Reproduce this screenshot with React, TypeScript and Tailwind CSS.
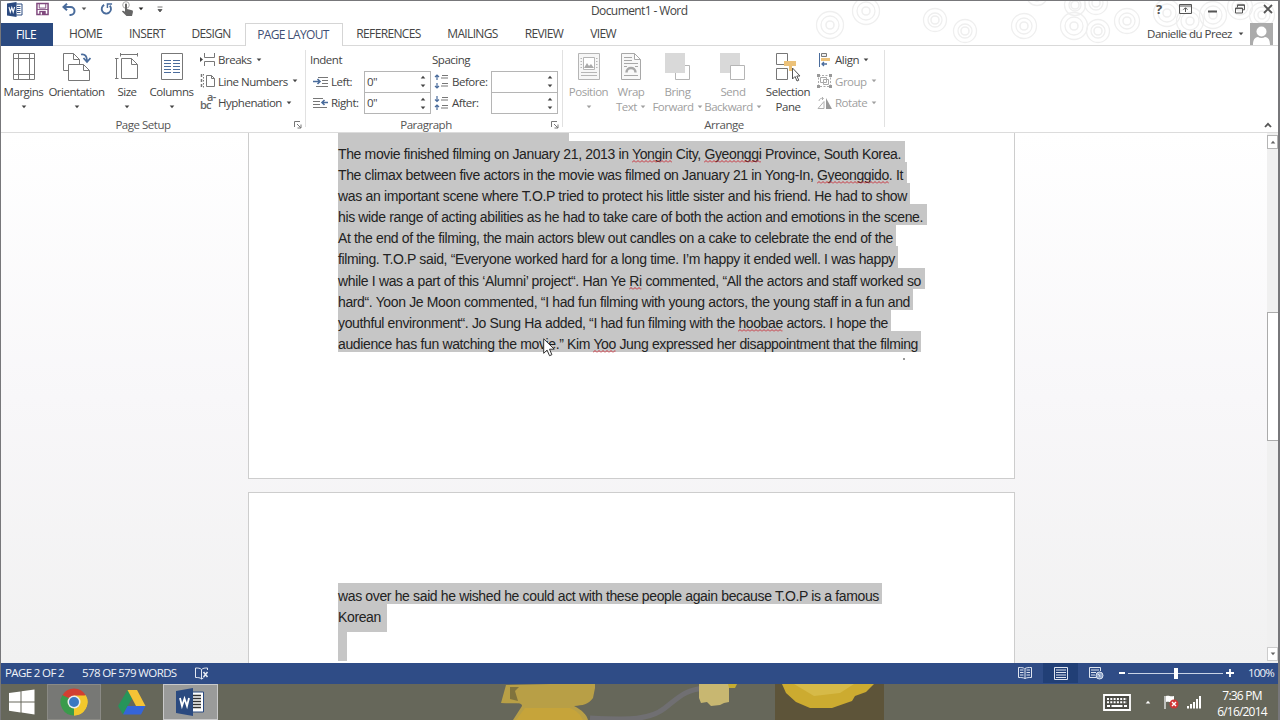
import type { ReactNode } from "react"
import clsx from "clsx"

const ui = "font-['Open_Sans','Noto_Sans',sans-serif]"

function Caret({ className = "" }: { className?: string }) {
  return (
    <svg width="6" height="4" viewBox="0 0 6 4" className={clsx("shrink-0", className)}>
      <path d="M.7.500h4.600L3 3.300z" fill="currentColor" />
    </svg>
  )
}

/* ---------- title bar ---------- */

const rings = [
  [830, 24, 14], [866, 10, 14], [935, 19, 12], [965, 30, 12], [1024, 25, 13], [1037, -6, 11],
  [1074, 25, 14], [1098, 30, 12], [1075, 4, 11], [1096, 2, 12], [1127, 20, 13], [1167, 12, 14],
  [1190, 20, 14], [1213, 14, 14], [1240, 6, 13], [1262, 14, 13],
]

function Rings() {
  return (
    <svg width="1280" height="45" className="pointer-events-none absolute left-0 top-0" fill="none" stroke="#efefef">
      {rings.map(([x, y, r], i) => (
        <g key={i}>
          <circle cx={x} cy={y} r={r - 0.5} strokeWidth="1.3" />
          <circle cx={x} cy={y} r={r - 5} strokeWidth="1.3" />
          <circle cx={x} cy={y} r={4} strokeWidth="1.6" />
        </g>
      ))}
    </svg>
  )
}

function WordSmall() {
  return (
    <svg width="16" height="15" viewBox="0 0 16 15">
      <path d="M8 2h7v11H8z" fill="#fff" stroke="#2b4a80" />
      <path d="M10 4.500h3.500M10 6.500h3.500M10 8.500h3.500M10 10.500h3.500" stroke="#2b4a80" strokeWidth=".9" />
      <path d="M0 1.600 9.500 0v15L0 13.400z" fill="#2b4a80" />
      <path d="m2 5 1.300 5L4.800 5.500 6.200 10 7.600 5" fill="none" stroke="#fff" strokeWidth="1.100" />
    </svg>
  )
}

function TitleBar() {
  return (
    <div className="relative flex h-[22px] items-start">
      <div className="flex h-4 w-[591px] items-center pl-[7px] text-[#555]">
        <WordSmall />
        <svg width="13" height="14" viewBox="0 0 14 14" className="ml-[13px]">
          <path d="M1 1h12v12H1z" fill="#fff" stroke="#80497e" strokeWidth="1.600" />
          <path d="M3.500 1v5h7V1M1 7.500h12" fill="none" stroke="#80497e" />
          <path d="M3.500 9h7v4h-7z" fill="#80497e" />
          <path d="M5 10.500h1.500V13H5z" fill="#fff" />
        </svg>
        <svg width="14" height="13" viewBox="0 0 14 13" className="ml-[13px]" fill="none" stroke="#4a6c9c" strokeWidth="2">
          <path d="M5 .8 1.500 4 5 7.300M2 4h6.500a4 4 0 0 1 0 8H7.500" />
        </svg>
        <Caret className="ml-[5px]" />
        <svg width="13" height="14" viewBox="0 0 14 14" className="ml-[13px]" fill="none" stroke="#4a6c9c" strokeWidth="2">
          <path d="M4.500 2.500A5 5 0 1 0 10.500 3.500" />
          <path d="M8 6V1.500H13" strokeWidth="1.600" />
        </svg>
        <svg width="13" height="16" viewBox="0 0 13 16" className="ml-[8px]">
          <circle cx="5" cy="4" r="3.300" fill="none" stroke="#aaa" />
          <path d="M4 3.500a1 1 0 0 1 2 0V8l5 1.200c1 .3 1 1 .9 2L11 15H5.500L1 10.500c0-1 1.500-1 3 .3z" fill="#666" />
        </svg>
        <Caret className="ml-[4px] text-[#222]" />
        <svg width="6" height="7" viewBox="0 0 6 7" className="ml-[13px]">
          <path d="M.5 1h5M1 3.500h4L3 6z" stroke="#555" fill="#555" strokeWidth=".8" />
        </svg>
      </div>
      <span className="mt-[2px] text-[12px] leading-4 tracking-[-0.600px] text-[#444]">Document1 - Word</span>
      <div className="absolute right-[2px] top-0 flex h-4 items-center text-[#555]">
        <span className="w-[8px] text-[13px] font-bold leading-4">?</span>
        <svg width="13" height="10" viewBox="0 0 13 10" className="ml-[15px]" fill="none" stroke="currentColor">
          <path d="M.5.500h12v9H.5zM.5 2h12M6.500 8V4M4.500 5.700l2-2 2 2" />
        </svg>
        <svg width="9" height="10" viewBox="0 0 9 10" className="ml-[16px]">
          <path d="M0 7.500h9" stroke="currentColor" strokeWidth="2" />
        </svg>
        <svg width="10" height="10" viewBox="0 0 10 10" className="ml-[18px]" fill="none" stroke="currentColor">
          <path d="M2.500 3.500V.8h7v5h-2M.5 4h7v5h-7zM.5 4.600h7M2.500 1.300h7" />
        </svg>
        <svg width="10" height="10" viewBox="0 0 10 10" className="ml-[18px] mr-[5px]" stroke="currentColor" strokeWidth="1.800">
          <path d="m1 1 8 8M9 1 1 9" />
        </svg>
      </div>
    </div>
  )
}

const tabs = [
  { name: "HOME", cls: "ml-[16px] w-[33px]" },
  { name: "INSERT", cls: "ml-[27px] w-[36px]" },
  { name: "DESIGN", cls: "ml-[27px] w-[38px]" },
]
const moreTabs = [
  { name: "REFERENCES", cls: "ml-[14px] w-[63px]" },
  { name: "MAILINGS", cls: "ml-[27px] w-[51px]" },
  { name: "REVIEW", cls: "ml-[27px] w-[38px]" },
  { name: "VIEW", cls: "ml-[27px] w-[26px]" },
]

function Tab({ name, cls }: { name: string; cls: string }) {
  return <span className={clsx("flex justify-center whitespace-nowrap", cls)}>{name}</span>
}

function TabRow() {
  return (
    <div className="relative flex h-[23px] items-center border-b border-[#d9d9d9] text-[12px] tracking-[-0.650px] text-[#444]">
      <div className="-mb-px flex h-[23px] w-[53px] items-center justify-center bg-[#2b4a80] pr-px tracking-[-0.600px] text-white">FILE</div>
      {tabs.map((t) => <Tab key={t.name} {...t} />)}
      <div className="-mb-px ml-[15px] flex h-[23px] w-[98px] items-center justify-center border border-b-0 border-[#d5d5d5] bg-white pr-[2px] text-[#3f4f74]">
        PAGE LAYOUT
      </div>
      {moreTabs.map((t) => <Tab key={t.name} {...t} />)}
      <div className="ml-auto mr-[7px] flex h-full items-center">
        <span className="text-[11.500px] tracking-[-0.500px]">Danielle du Preez</span>
        <Caret className="ml-[6px]" />
        <svg width="23" height="22" viewBox="0 0 23 22" className="ml-[6px]">
          <path d="M0 0h23v22H0z" fill="#ababab" />
          <circle cx="11.500" cy="8.500" r="5" fill="#fff" />
          <path d="M3 22c0-5 1.500-7.500 5-8 2 1.400 5 1.400 7 0 3.500.5 5 3 5 8z" fill="#fff" />
        </svg>
      </div>
    </div>
  )
}

/* ---------- ribbon ---------- */

type BigProps = { icon: ReactNode; label: string; second?: string; caret?: boolean; muted?: boolean; className: string }

function BigButton({ icon, label, second, caret = true, muted, className }: BigProps) {
  return (
    <div className={clsx("flex shrink-0 flex-col items-center whitespace-nowrap pt-[6px]", muted ? "text-[#a0a0a0]" : "text-[#444]", className)}>
      <div className="flex h-[30px] items-start justify-center">{icon}</div>
      <span className="mt-px leading-[15px]">{label}</span>
      <div className="flex h-[15px] items-center gap-[3px] leading-[15px]">
        {second && <span>{second}</span>}
        {caret && <Caret />}
      </div>
    </div>
  )
}

function SmallButton({ icon, label, muted }: { icon: ReactNode; label: string; muted?: boolean }) {
  return (
    <div className={clsx("flex h-[21.500px] items-center whitespace-nowrap", muted ? "text-[#a0a0a0]" : "text-[#444]")}>
      <div className="w-[18px]">{icon}</div>
      <span>{label}</span>
      <Caret className="ml-[4px]" />
    </div>
  )
}

function Group({ title, launcher, className, children }: { title: string; launcher?: boolean; className: string; children: ReactNode }) {
  return (
    <div className={clsx("relative flex h-full shrink-0 flex-col pt-px", className)}>
      <div className="flex h-[71px]">{children}</div>
      <div className="flex h-[14px] items-center justify-center leading-[14px] text-[#555]">{title}</div>
      {launcher && (
        <svg width="8" height="8" viewBox="0 0 8 8" className="absolute bottom-[3px] right-[4px]" fill="none" stroke="#777">
          <path d="M.5 6V.500H6M3 3l4 4M7 3.500V7H3.500" />
        </svg>
      )}
      <div className="absolute right-0 top-[4px] h-[77px] w-px bg-[#e1e1e1]" />
    </div>
  )
}

const MarginsIcon = (
  <svg width="24" height="28" viewBox="0 0 24 28" fill="none" stroke="#777">
    <path d="M1.500.500h21v26h-21zM6.500.500v26M17.500.500v26M1.500 5.500h21M1.500 21.500h21" />
  </svg>
)
const OrientationIcon = (
  <svg width="28" height="29" viewBox="0 0 28 29" fill="none" stroke="#777">
    <path d="M5 17.500H.5V.500h10l6 6V11" />
    <path d="M10.500.500v6h6" />
    <path d="M5.500 11.500h15l6 6v10h-21z" fill="#fff" />
    <path d="M20.500 11.500v6h6" />
    <path d="M18 1.500c4-1 6 2 6 6M20.500 5l3.500 4 3.500-4" stroke="#4a6c9c" strokeWidth="1.800" />
  </svg>
)
const SizeIcon = (
  <svg width="24" height="28" viewBox="0 0 24 28" fill="none" stroke="#777">
    <path d="M5.500 1.500h17M5.500 0v3.500M22.500 0v3.500M1.500 5v21M0 5.500h3.500M0 25.500h3.500" />
    <path d="M6.500 5.500h10l6 6v14h-16z" fill="#fff" />
    <path d="M16.500 5.500v6h6" />
  </svg>
)
const ColumnsIcon = (
  <svg width="22" height="28" viewBox="0 0 22 28" fill="none">
    <path d="M.5.500h21v26H.5z" stroke="#777" />
    <path d="M3 7.500h7M3 10.500h7M3 13.500h7M3 16.500h7M3 19.500h7M12 7.500h7M12 10.500h7M12 13.500h7M12 16.500h7M12 19.500h7" stroke="#4a6c9c" />
  </svg>
)

function PageSetup() {
  return (
    <Group title="Page Setup" launcher className="w-[306px] [&>div:nth-child(2)]:pr-[20px]">
      <BigButton className="w-[47px]" icon={MarginsIcon} label="Margins" />
      <BigButton className="w-[59px]" icon={OrientationIcon} label="Orientation" />
      <BigButton className="w-[42px]" icon={SizeIcon} label="Size" />
      <BigButton className="w-[47px]" icon={ColumnsIcon} label="Columns" />
      <div className="ml-[5px] pt-[2px]">
        <SmallButton
          label="Breaks"
          icon={
            <svg width="16" height="13" viewBox="0 0 16 13" fill="none" stroke="#777">
              <path d="M4.500 0v4.500h10V0M4.500 13V8.500h10V13" />
              <path d="m0 4 3 2.500L0 9z" fill="#444" stroke="none" />
            </svg>
          }
        />
        <SmallButton
          label="Line Numbers"
          icon={
            <svg width="16" height="14" viewBox="0 0 16 14" fill="none" stroke="#777">
              <path d="M6.500 1.500h5l3 3v8h-8zM11.500 1.500v3h3" />
              <path d="M1.500 0v14" strokeDasharray="3 2" strokeWidth="1.500" />
              <path d="M3.500 0v14" strokeDasharray="1.500 1.500" />
            </svg>
          }
        />
        <SmallButton
          label="Hyphenation"
          icon={
            <div className="flex h-[14px] w-4 items-end text-[11px] font-semibold leading-[11px] tracking-[-0.800px] text-[#666]">
              <span>b</span>
              <div className="flex flex-col">
                <span className="h-[5px] pl-px leading-[5px]">a-</span>
                <span className="h-[11px]">c</span>
              </div>
            </div>
          }
        />
      </div>
    </Group>
  )
}

function Spinner({ value, className }: { value: string; className: string }) {
  return (
    <div className={clsx("flex h-[22px] items-center justify-between border border-[#b5b5b5] bg-white pl-[2px] pr-[4px] text-[#444]", className)}>
      <span>{value}</span>
      <div className="flex flex-col gap-[5px]">
        <Caret className="rotate-180" />
        <Caret />
      </div>
    </div>
  )
}

function IndentIcon({ right }: { right?: boolean }) {
  return (
    <svg width="16" height="12" viewBox="0 0 16 12" fill="none" stroke="#777">
      {right ? <path d="M0 1.500h10M0 4.500h7M0 7.500h7M0 10.500h14" /> : <path d="M5 1.500h10M9 4.500h6M9 7.500h6M3 10.500h12" />}
      <path d={right ? "M15 5.500H9M11.500 3 9 5.500 11.500 8" : "M0 5.500h7M4.500 3 7 5.500 4.500 8"} stroke="#4a6c9c" strokeWidth="1.600" />
    </svg>
  )
}

function SpacingIcon({ after }: { after?: boolean }) {
  return (
    <svg width="15" height="15" viewBox="0 0 15 15" fill="none" stroke="#777">
      <path d="M8 1.500h6M7 4h7M8 9.500h6M7 12h7" />
      <path
        d={after ? "M3 0v5.500M1 3.500l2 2 2-2M3 14V9M1 11l2-2 2 2" : "M3 6V1M1 3l2-2 2 2M3 9v5M1 12l2 2 2-2"}
        stroke="#4a6c9c"
        strokeWidth="1.200"
      />
    </svg>
  )
}

function Paragraph() {
  return (
    <Group title="Paragraph" launcher className="w-[257px] text-[#444] [&>div:nth-child(2)]:pr-[17px]">
      <div className="w-[125px] shrink-0 pl-[4px] pt-[2px]">
        <div className="h-[22px] leading-[21px]">Indent</div>
        <div className="flex h-[21px] items-center">
          <div className="w-[21px] shrink-0 pl-[3px]"><IndentIcon /></div>
          <span className="w-[33px] shrink-0">Left:</span>
          <Spinner value={'0"'} className="w-[67px] shrink-0" />
        </div>
        <div className="flex h-[22px] items-center">
          <div className="w-[21px] shrink-0 pl-[3px]"><IndentIcon right /></div>
          <span className="w-[33px] shrink-0">Right:</span>
          <Spinner value={'0"'} className="w-[67px] shrink-0" />
        </div>
      </div>
      <div className="w-[128px] shrink-0 pl-[1px] pt-[2px]">
        <div className="h-[22px] leading-[21px]">Spacing</div>
        <div className="flex h-[21px] items-center">
          <div className="w-[20px] shrink-0 pl-[2px]"><SpacingIcon /></div>
          <span className="w-[39px] shrink-0">Before:</span>
          <Spinner value="" className="w-[67px] shrink-0" />
        </div>
        <div className="flex h-[22px] items-center">
          <div className="w-[20px] shrink-0 pl-[2px]"><SpacingIcon after /></div>
          <span className="w-[39px] shrink-0">After:</span>
          <Spinner value="" className="w-[67px] shrink-0" />
        </div>
      </div>
    </Group>
  )
}

const PositionIcon = (
  <svg width="22" height="28" viewBox="0 0 22 28" fill="none" stroke="#b5b5b5">
    <path d="M.5.500h21v26H.5z" fill="#f6f6f6" />
    <path d="M5.500 4.500h11v12h-11z" fill="#fff" />
    <path d="m6 15 3-5 2 3 2-2 3 4z" fill="#aaa" stroke="none" />
    <path d="M2.500 5.500H4M2.500 8.500H4M2.500 11.500H4M2.500 14.500H4M18 5.500h1.500M18 8.500h1.500M18 11.500h1.500M18 14.500h1.500M3 19.500h16M3 22.500h16" />
  </svg>
)
const WrapIcon = (
  <svg width="20" height="28" viewBox="0 0 20 28" fill="none" stroke="#a8a8a8">
    <path d="M.5.500h13l6 6v20H.5zM13.500.500v6h6" fill="#f8f8f8" />
    <path d="M3 4.500h8M3 7.500h8M3 10.500h14M3 13.500h3M14 13.500h3M3 22.500h14" />
    <path d="M5.500 19.500c0-6 9-6 9 0" strokeWidth="2.500" />
  </svg>
)
const ForwardIcon = (
  <svg width="26" height="28" viewBox="0 0 26 28" fill="none">
    <path d="M10.500 12.500h14v14h-14z" fill="#fff" stroke="#b5b5b5" />
    <path d="M0 0h20v20H0z" fill="#d9d9d9" />
  </svg>
)
const BackwardIcon = (
  <svg width="26" height="28" viewBox="0 0 26 28" fill="none">
    <path d="M0 0h20v20H0z" fill="#d9d9d9" />
    <path d="M10.500 12.500h14v14h-14z" fill="#fff" stroke="#b5b5b5" />
  </svg>
)
const SelectionIcon = (
  <svg width="26" height="29" viewBox="0 0 26 29" fill="none">
    <path d="M1.500.500h11v11h-11zM1.500 15.500h11v11h-11z" stroke="#777" />
    <path d="M9 8h12v5h-4v5h-3v-5H9z" fill="#ecc27a" />
    <path d="M17.500 15v11l2.500-2.500 2 4.500 1.800-.8-2-4.200h3.200z" fill="#fff" stroke="#555" />
  </svg>
)

function Arrange() {
  return (
    <Group title="Arrange" className="w-[322px]">
      <BigButton muted className="ml-[4px] w-[43px]" icon={PositionIcon} label="Position" />
      <BigButton muted className="w-[42px]" icon={WrapIcon} label="Wrap" second="Text" />
      <BigButton muted className="w-[51px]" icon={ForwardIcon} label="Bring" second="Forward" />
      <BigButton muted className="w-[60px]" icon={BackwardIcon} label="Send" second="Backward" />
      <BigButton className="w-[50px]" caret={false} icon={SelectionIcon} label="Selection" second="Pane" />
      <div className="ml-[4px] pt-[2px]">
        <SmallButton
          label="Align"
          icon={
            <svg width="14" height="14" viewBox="0 0 14 14" fill="none">
              <path d="M2.500 0v14" stroke="#4a6c9c" />
              <path d="M4.500.500h5v3h-5z" fill="#eee" stroke="#777" />
              <path d="M4 5h9v3H4z" fill="#ecc27a" />
              <path d="M10 11H5M7 9l-2 2 2 2" stroke="#4a6c9c" strokeWidth="1.300" />
            </svg>
          }
        />
        <SmallButton
          muted
          label="Group"
          icon={
            <svg width="15" height="14" viewBox="0 0 15 14" fill="none" stroke="#aaa">
              <path d="M1.500 1.500h12v11h-12z" strokeDasharray="2 1.500" />
              <path d="M3.500 3.500h6v5h-6zM6.500 5.500h5v5h-5z" />
              <path d="M0 0h3v3H0zM12 0h3v3h-3zM0 11h3v3H0zM12 11h3v3h-3z" fill="#999" stroke="none" />
            </svg>
          }
        />
        <SmallButton
          muted
          label="Rotate"
          icon={
            <svg width="15" height="12" viewBox="0 0 15 12" fill="none" stroke="#b0b0b0">
              <path d="M1 11.500h6v-7z" />
              <path d="M9 1v11h6z" fill="#999" stroke="none" />
              <path d="M2 4c0-2 2-3 4-2.500M5 0l1.500 1.500L5 3" />
            </svg>
          }
        />
      </div>
    </Group>
  )
}

function Ribbon() {
  return (
    <div className="relative flex h-[87px] border-b border-[#dcdcdc] bg-white text-[11.500px] tracking-[-0.480px]">
      <PageSetup />
      <Paragraph />
      <Arrange />
      <svg width="8" height="6" viewBox="0 0 8 6" className="mb-[4px] ml-auto mr-[8px] self-end" fill="none" stroke="#555" strokeWidth="1.800">
        <path d="m1 5 3-3.200L7 5" />
      </svg>
    </div>
  )
}

/* ---------- document ---------- */

function Sp({ children }: { children: string }) {
  return (
    <span className="relative">
      {children}
      <svg className="absolute bottom-[-1px] left-0 h-[3px] w-full" aria-hidden="true">
        <defs>
          <pattern id="squiggle" width="4" height="3" patternUnits="userSpaceOnUse">
            <path d="M0 2.500 2 .5l2 2" fill="none" stroke="#c8303a" strokeWidth="1" />
          </pattern>
        </defs>
        <rect width="100%" height="3" fill="url(#squiggle)" />
      </svg>
    </span>
  )
}

// box = highlighted width, text = set width of the line
const lines: { box: string; text: string; body: ReactNode }[] = [
  { box: "w-[567px]", text: "w-[563px]", body: <>The movie finished filming on January 21, 2013 in <Sp>Yongin</Sp> City, <Sp>Gyeonggi</Sp> Province, South Korea.</> },
  { box: "w-[569px]", text: "w-[565px]", body: <>The climax between five actors in the movie was filmed on January 21 in Yong-In, <Sp>Gyeonggido</Sp>. It</> },
  { box: "w-[572px]", text: "w-[569px]", body: "was an important scene where T.O.P tried to protect his little sister and his friend. He had to show" },
  { box: "w-[589px]", text: "w-[585px]", body: "his wide range of acting abilities as he had to take care of both the action and emotions in the scene." },
  { box: "w-[558px]", text: "w-[555px]", body: "At the end of the filming, the main actors blew out candles on a cake to celebrate the end of the" },
  { box: "w-[560px]", text: "w-[557px]", body: "filming. T.O.P said, “Everyone worked hard for a long time. I’m happy it ended well. I was happy" },
  { box: "w-[587px]", text: "w-[583px]", body: <>while I was a part of this ‘Alumni’ project“. Han Ye <Sp>Ri</Sp> commented, “All the actors and staff worked so</> },
  { box: "w-[575px]", text: "w-[572px]", body: "hard“. Yoon Je Moon commented, “I had fun filming with young actors, the young staff in a fun and" },
  { box: "w-[553px]", text: "w-[550px]", body: <>youthful environment“. Jo Sung Ha added, “I had fun filming with the <Sp>hoobae</Sp> actors. I hope the</> },
  { box: "w-[583px]", text: "w-[580px]", body: <>audience has fun watching the movie.” Kim <Sp>Yoo</Sp> Jung expressed her disappointment that the filming</> },
]

function Line({ box, text, children }: { box: string; text: string; children: ReactNode }) {
  return (
    <div className={clsx("h-[21.100px] bg-[#c6c6c6] pt-[5px]", box)}>
      <div className={clsx("h-4 whitespace-nowrap leading-4 [text-align-last:justify]", text)}>{children}</div>
    </div>
  )
}

function ScrollBar() {
  return (
    <div className="mr-[2px] flex w-[11px] shrink-0 flex-col bg-[#f0f0f0] pt-[2px] text-[#666]">
      <div className="flex h-[14px] items-center justify-center border border-[#b5b5b5] bg-white"><Caret className="rotate-180" /></div>
      <div className="mt-[163px] h-[129px] border border-r-0 border-[#ababab] bg-white" />
      <div className="mb-[2px] mt-auto flex h-[14px] items-center justify-center border border-[#ccc] bg-white"><Caret /></div>
    </div>
  )
}

function Document() {
  return (
    <div className="relative flex h-[530px] overflow-hidden bg-linear-to-b from-white via-[#f8f7f9] via-50% to-[#f1f1f1]">
      <div className="ml-[248px] w-[767px] font-['Liberation_Sans',Arial,sans-serif] text-[14px] tracking-[-0.370px] text-[#222]">
        <div className="h-[346px] border border-t-0 border-[#cdcdcd] bg-white pl-[89px]">
          <div className="h-[8px] w-[231px] bg-[#c6c6c6]" />
          {lines.map((l, i) => <Line key={i} box={l.box} text={l.text}>{l.body}</Line>)}
          <div className="ml-[565px] mt-[6px] h-[2px] w-[2px] bg-[#999]" />
        </div>
        <div className="mt-[13px] h-[180px] border border-[#cdcdcd] bg-white pl-[89px] pt-[90px]">
          <Line box="w-[544px]" text="w-[541px]">was over he said he wished he could act with these people again because T.O.P is a famous</Line>
          <div className="h-[28px] w-[49px] bg-[#c6c6c6] pt-[5px] leading-4">Korean</div>
          <div className="h-[29px] w-[9px] bg-[#c6c6c6]" />
        </div>
      </div>
      <div className="flex-1" />
      <ScrollBar />
      <svg width="12" height="19" viewBox="0 0 12 19" className="absolute left-[543px] top-[205px]">
        <path d="M.7.8v14.500l3.400-3.200 2.400 5.600 2.400-1-2.400-5.500h4.700z" fill="#fff" stroke="#333" />
      </svg>
    </div>
  )
}

/* ---------- status bar and taskbar ---------- */

function StatusBar() {
  return (
    <div className="flex h-[21px] items-center bg-[#2f4c86] pb-px text-[11.500px] tracking-[-0.630px] text-[#f0f3f8]">
      <span className="ml-[5px] w-[77px]">PAGE 2 OF 2</span>
      <span className="w-[113px]">578 OF 579 WORDS</span>
      <svg width="15" height="13" viewBox="0 0 15 13" fill="none" stroke="#e4e9f2">
        <path d="M6.500 2.500C5 1 3 1 .5 1v9.500c2.500 0 4.500 0 6 1.500zM6.500 2.500C8 1 10 1 12.500 1v2M6.500 12l2-1.200" />
        <path d="m8.500 5 4 5M12.500 5l-4 5" strokeWidth="1.600" />
      </svg>
      <div className="ml-auto flex h-full items-center pr-[2px]">
        <svg width="14" height="12" viewBox="0 0 14 12" fill="none" stroke="#dfe5f0">
          <path d="M6.500 1.500C5 .5 3 .5.5.500v10c2.500 0 4.500 0 6.500 1 2-1 4-1 6.500-1V.500C11 .5 8.500.500 7 1.500v10M2 3h3.500M2 5.500h3.500M2 8h3.500M8.500 3H12M8.500 5.500H12M8.500 8H12" />
        </svg>
        <div className="ml-[11px] flex h-full w-[35px] items-center justify-center bg-[#213f76]">
          <svg width="14" height="13" viewBox="0 0 14 13" fill="none" stroke="#dfe5f0">
            <path d="M.5.500h13v12H.5zM2 3h10M2 5.500h10M2 8h10M2 10.500h10" />
          </svg>
        </div>
        <svg width="15" height="13" viewBox="0 0 15 13" className="ml-[11px]" fill="none" stroke="#dfe5f0">
          <path d="M7 10.500H.5v-10h11V4M2 3h8M2 5.500h5M2 8h4" />
          <circle cx="10.500" cy="8.500" r="3.500" fill="#8ea3c8" />
          <path d="m8.500 7 2 1 .5 2" />
        </svg>
        <div className="ml-[15px] h-[2px] w-[6px] bg-white" />
        <div className="relative ml-[3px] h-px w-[95px] bg-[#c9d3e6]">
          <div className="absolute left-[46px] top-[-5px] h-[11px] w-[4px] bg-white" />
        </div>
        <svg width="8" height="8" viewBox="0 0 8 8" className="ml-[3px]" stroke="#fff" strokeWidth="1.800">
          <path d="M0 4h8M4 0v8" />
        </svg>
        <span className="ml-[14px] mr-[4px] w-[26px] whitespace-nowrap tracking-[-0.850px]">100%</span>
      </div>
    </div>
  )
}

function Wallpaper() {
  return (
    <svg width="480" height="36" viewBox="0 0 480 36" className="absolute left-[460px] top-0">
      <path d="M315 0h109v36H315z" fill="#5d5439" />
      <path d="M130 34c40 2 60 2 75-10s20-18 40-20" stroke="#706f72" strokeWidth="5" fill="none" />
      <path d="M46 1 90 0h45v4l-2 10c-5 7-10 7-19 8 8 4 13 9 14 14H53l9-14c0-4-6-2-21-3z" fill="#b89f46" />
      <path d="M65 24h45c7 3 10 6 13 12H56z" fill="#c6a43a" />
      <path d="M50 3h9l-4 4 3 10-8-2z" fill="#80733d" />
      <path d="M239 0h30v18l-5 1-4 2-9 1-4-4-6 1-2-5z" fill="#c8b771" />
      <path d="M268 0h9l-2 4h-6z" fill="#c6ab2f" />
      <path d="M322 0h92l-8 8-11 4-3 5-20 7h-22l-14-6-10-9z" fill="#ccab30" />
      <path d="M334 0h60l-14 9-26 3z" fill="#d6ba48" />
    </svg>
  )
}

function Taskbar() {
  return (
    <div className="relative flex h-[36px] items-stretch bg-[#66675a]">
      <Wallpaper />
      <div className="flex w-[47px] items-center pl-[9px]">
        <svg width="26" height="26" viewBox="0 0 26 26" fill="#fff">
          <path d="m0 4 11.500-1.600v10H0zM12.500 2.200 25.500.5v11.900h-13zM0 13.400h11.500v10L0 21.800zM12.500 13.400h13v12l-13-1.800z" />
        </svg>
      </div>
      <div className="flex w-[54px] items-center justify-center border border-[#8a8a85] bg-[#777875]">
        <svg width="28" height="28" viewBox="0 0 28 28">
          <path d="M14 14 2.300 7.250A13.500 13.500 0 0 1 25.700 7.250z" fill="#d23f31" />
          <path d="M14 14 25.700 7.250A13.500 13.500 0 0 1 14 27.500z" fill="#f3c82c" />
          <path d="M14 14 14 27.500A13.500 13.500 0 0 1 2.300 7.250z" fill="#3a9b4b" />
          <path d="M14 7.500h11.800A13.500 13.500 0 0 1 14 27.500l5.500-10z" fill="#f3c82c" />
          <path d="M2.300 7.250 8.500 17.200l5.500-5z" fill="#3a9b4b" />
          <circle cx="14" cy="14" r="6.500" fill="#eee" />
          <circle cx="14" cy="14" r="5" fill="#3b78c2" />
        </svg>
      </div>
      <div className="flex w-[62px] items-center justify-center">
        <svg width="28" height="25" viewBox="0 0 28 25">
          <path d="M9.500 0 14 8.500 5 24.500 0 16z" fill="#26955a" />
          <path d="M9.500 0H19l8.500 16H18z" fill="#f5c336" />
          <path d="M9.500 16h18L23 24.500H5z" fill="#3565d8" />
        </svg>
      </div>
      <div className="flex w-[55px] items-center justify-center border border-[#c9c9c9] bg-[#9a9b9a]">
        <svg width="29" height="28" viewBox="0 0 29 28">
          <path d="M14 4h13.500v20H14z" fill="#fff" stroke="#2b4a80" />
          <path d="M17 7.500h8M17 10.500h8M17 13.500h8M17 16.500h8M17 19.500h8" stroke="#333" strokeWidth="1.300" />
          <path d="M0 3 17 0v28L0 25z" fill="#2b4a80" />
          <path d="m4 10 2 8 2.500-7.500L11 18l2-8" fill="none" stroke="#fff" strokeWidth="1.800" />
        </svg>
      </div>
      <div className="ml-auto flex items-center pr-[2px] text-white">
        <svg width="28" height="17" viewBox="0 0 28 17" fill="none">
          <path d="M1 1h26v15H1z" fill="#4b4b45" stroke="#fff" strokeWidth="1.800" />
          <path d="M4 5h20M4 8.300h20" stroke="#fff" strokeWidth="2" strokeDasharray="2 1.300" />
          <path d="M4 12h3M8.500 12h11M21 12h3" stroke="#fff" strokeWidth="2" />
        </svg>
        <Caret className="ml-[14px] rotate-180" />
        <svg width="15" height="14" viewBox="0 0 15 14" className="ml-[13px]">
          <path d="M1 1v13" stroke="#ddd" strokeWidth="1.500" />
          <path d="M2 1c3-1 4 1 8 0v6c-4 1-5-1-8 0z" fill="#fff" />
          <circle cx="10" cy="9" r="4.500" fill="#cf3535" />
          <path d="m8 7 4 4M12 7l-4 4" stroke="#fff" strokeWidth="1.400" />
        </svg>
        <svg width="14" height="13" viewBox="0 0 14 13" className="ml-[8px]" fill="#fff">
          <path d="M0 10h2v2.500H0zM3 8h2v4.500H3zM6 6h2v6.500H6zM9 3h2v9.500H9zM12 0h2v12.500h-2z" />
        </svg>
        <div className="ml-[14px] mr-[9px] flex w-[54px] flex-col items-center whitespace-nowrap pt-[3px] text-[12px] leading-4 tracking-[-0.800px]">
          <span>7:36 PM</span>
          <span>6/16/2014</span>
        </div>
      </div>
    </div>
  )
}

export default function App() {
  return (
    <div className={clsx("relative h-[720px] w-[1280px] overflow-hidden bg-white", ui)}>
      <div className="flex h-full flex-col border-t border-[#77777a]">
        <div className="relative h-[45px] bg-white">
          <Rings />
          <TitleBar />
          <TabRow />
        </div>
        <Ribbon />
        <Document />
        <StatusBar />
        <Taskbar />
      </div>
      {/* window edge */}
      <div className="pointer-events-none absolute inset-0 border-l border-r-2 border-t border-[#77777a]" />
    </div>
  )
}
